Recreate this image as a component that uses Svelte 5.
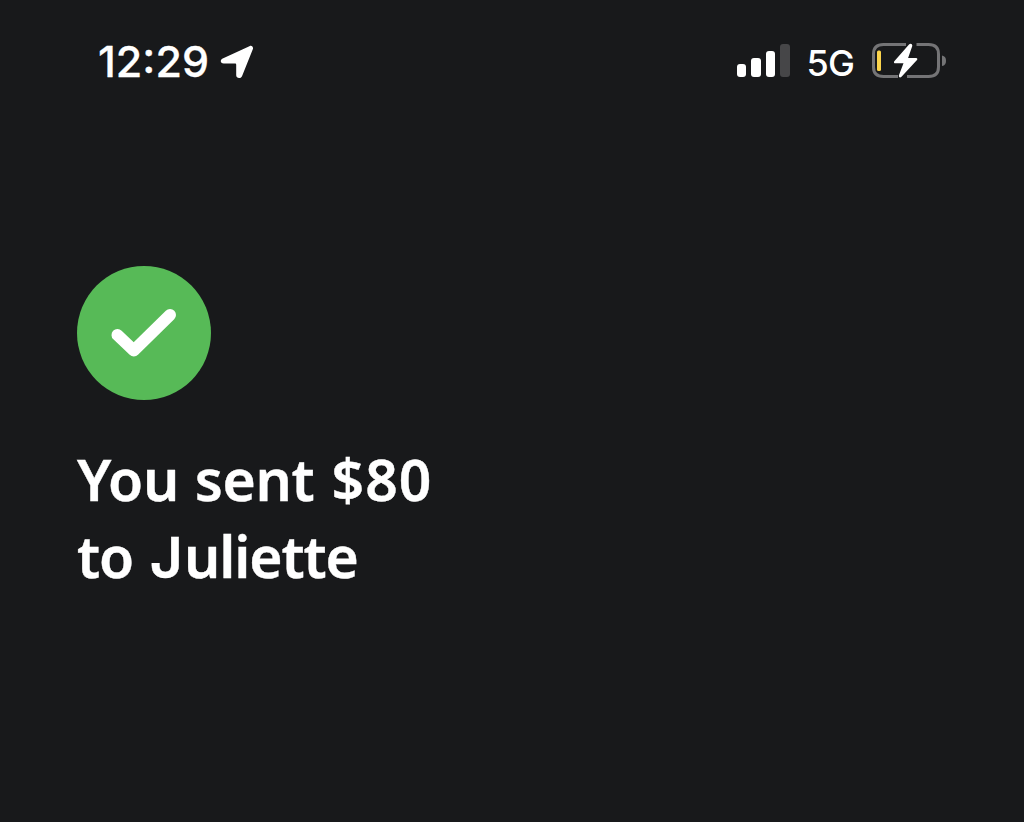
<script>
  let time = "12:29";
  let network = "5G";
  let amount = 80;
  let recipient = "Juliette";

  // heights of the signal bars, the last one is not active
  const bars = [
    { height: 13, active: true },
    { height: 19, active: true },
    { height: 26, active: true },
    { height: 33, active: false },
  ];
</script>

<div class="screen">
  <header class="status-bar">
    <div class="left">
      <span class="time">{time}</span>
      <svg class="location" width="34" height="36" viewBox="0 0 34 36">
        <path
          d="M29.4 2.2C31.5.8 33.8 2.9 32.8 5.3L22 32.2C20.7 35 16.2 34.6 16.2 31.3V20.7C16.2 19.8 15.8 19.4 15 19.4H3.7C.4 19.4-.4 15.9 2.7 14.4Z"
        />
      </svg>
    </div>
    <div class="right">
      <div class="signal">
        {#each bars as bar}
          <span
            class="bar"
            class:active={bar.active}
            style="height: {bar.height}px"
          ></span>
        {/each}
      </div>
      <span class="network">{network}</span>
      <svg class="battery" width="76" height="38" viewBox="0 0 76 38">
        <path
          class="shell"
          d="M36 3.5H13.5C7 3.5 3.5 7 3.5 13V26C3.5 32 7 35.5 13.5 35.5H28M46.5 3.5H58.5C65 3.5 68.5 7 68.5 13V26C68.5 32 65 35.5 58.5 35.5H37"
        />
        <path class="cap" d="M72 14.5C75 15 76 17 76 19.7C76 22.5 75 24.5 72 25Z" />
        <rect class="level" x="7" y="9.5" width="4" height="20.5" rx="1.5" />
        <path
          class="bolt"
          d="M39 3.5L24.3 20.2C23.5 21.2 24.1 22.3 25.3 22.3H33.5L29 34C28.4 36.2 30 37.2 31.5 35.7L47 19C47.8 18 47.3 17 46.1 17H38.1L42.2 5.2C42.8 3 40.6 1.8 39 3.5Z"
        />
      </svg>
    </div>
  </header>

  <main>
    <div class="badge">
      <svg width="134" height="134" viewBox="0 0 134 134">
        <path d="M40.5 69L56.8 84.5L93 49" />
      </svg>
    </div>
    <h1>
      <span class="line sent">You sent <span class="amount">${amount}</span></span>
      <span class="line recipient"
        >to <span class="initial">{recipient[0]}</span>{recipient.slice(1)}</span
      >
    </h1>
  </main>
</div>

<style>
  :global(body) {
    margin: 0;
    background-color: #18191b;
  }
  .screen {
    box-sizing: border-box;
    height: 822px;
    overflow: hidden;
    color: white;
    background-color: #18191b;
  }
  .status-bar {
    display: flex;
    justify-content: space-between;
    height: 124px;
    padding: 0 78px 0 98px;
    font-family: Inter, sans-serif;
  }
  .left,
  .right {
    display: flex;
    align-items: center;
    height: 123px;
  }
  .time {
    font-size: 43px;
    font-weight: 550;
    margin-bottom: 2px;
    -webkit-text-stroke: 0.3px white;
  }
  .location {
    margin-left: 11px;
    fill: white;
  }
  .signal {
    display: flex;
    align-items: flex-end;
    gap: 5px;
    height: 33px;
    margin-right: 18px;
    margin-bottom: 2px;
  }
  .bar {
    width: 9.5px;
    border-radius: 3px;
    background-color: #464648;
  }
  .bar.active {
    background-color: white;
  }
  .network {
    font-size: 36px;
    font-weight: 450;
    letter-spacing: -0.8px;
    margin-top: 2px;
    margin-right: 16px;
    margin-left: -1.5px;
  }
  .battery {
    margin-bottom: 3px;
  }
  .shell {
    fill: none;
    stroke: #747476;
    stroke-width: 3;
  }
  .cap {
    fill: #747476;
  }
  .level {
    fill: #fbd44c;
  }
  .bolt {
    fill: white;
  }
  main {
    padding: 142px 77px 0;
  }
  .badge {
    width: 134px;
    height: 134px;
    border-radius: 50%;
    background-color: #57ba57;
  }
  .badge svg {
    display: block;
    fill: none;
    stroke: white;
    stroke-width: 12;
    stroke-linecap: round;
    stroke-linejoin: round;
  }
  h1 {
    margin: 41px 0 0;
    font-family: "Noto Sans", sans-serif;
    font-size: 57px;
    font-weight: 600;
    line-height: 77px;
    stroke-linejoin: round;
    -webkit-text-stroke: 0.4px white;
  }
  .line {
    display: block;
    height: 77px;
    white-space: nowrap;
  }
  .sent {
    letter-spacing: -0.4px;
    word-spacing: 1.5px;
  }
  .amount {
    letter-spacing: 1px;
    margin-left: 1.5px;
  }
  .recipient {
    letter-spacing: -1.1px;
    word-spacing: 3px;
  }
  /* this capital stands on the baseline in Inter */
  .initial {
    font-family: Inter, sans-serif;
    letter-spacing: 1px;
  }
</style>
